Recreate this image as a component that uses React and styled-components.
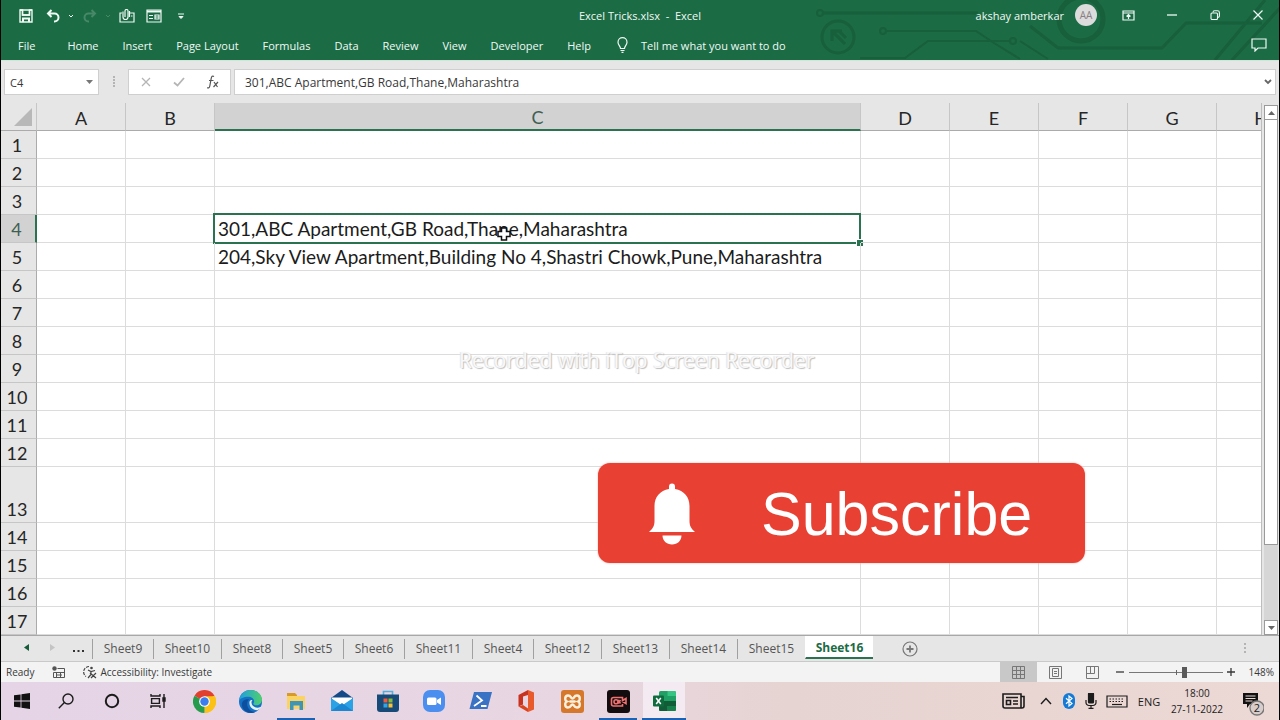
import React, { useState } from 'react';
import styled, { createGlobalStyle } from 'styled-components';

const UI_FONT = '"Open Sans", "Noto Sans", sans-serif';
const CELL_FONT = 'Lato, "Noto Sans", sans-serif';

const GlobalStyle = createGlobalStyle`
  * {
    box-sizing: border-box;
  }
  body {
    margin: 0;
    font-family: ${UI_FONT};
    font-size: 11px;
    color: #383838;
  }
  button, input {
    margin: 0;
    padding: 0;
    border: 0;
    background: none;
    color: inherit;
    font: inherit;
  }
  svg {
    display: block;
    flex: none;
  }
`;

const Window = styled.div`
  display: flex;
  flex-direction: column;
  height: 100vh;
  overflow: hidden;
  border: solid #000;
  border-width: 0 1px;
  background: #e6e6e6;
`;

/* ---------- title bar and ribbon ---------- */

const Header = styled.header`
  position: relative;
  flex: none;
  background: #1b6b45;
  color: #f0faf4;
`;

const Circuit = styled.svg`
  position: absolute;
  top: 0;
  right: 0;
`;

const TitleBar = styled.div`
  position: relative;
  display: grid;
  grid-template-columns: 1fr auto 1fr;
  align-items: center;
  height: 28px;
`;

const QuickAccess = styled.div`
  display: flex;
  align-items: center;
  padding: 2px 0 0 11px;
`;

const QuickButton = styled.button`
  display: flex;
  align-items: center;
  justify-content: center;
  width: ${(props) => (props.$narrow ? 10 : 27)}px;
  height: 28px;
  opacity: ${(props) => (props.disabled ? 0.2 : 1)};
`;

const Title = styled.h1`
  margin: 0;
  font-size: 11px;
  font-weight: 400;
  white-space: pre;
`;

const WindowControls = styled.div`
  display: flex;
  align-items: center;
  justify-content: flex-end;
`;

const Avatar = styled.span`
  display: flex;
  align-items: center;
  justify-content: center;
  width: 22px;
  height: 22px;
  margin: 0 10px 0 11px;
  border-radius: 50%;
  background: #dcdcdc;
  color: #8a7f84;
  font-size: 10px;
`;

const ControlButton = styled.button`
  display: flex;
  align-items: center;
  justify-content: center;
  width: 43px;
  height: 28px;
`;

const Ribbon = styled.nav`
  position: relative;
  display: flex;
  align-items: center;
  height: 32px;
  padding: 2px 0 0 5px;
`;

const RibbonTab = styled.button`
  height: 30px;
  padding: 0 12px;
  white-space: nowrap;
  &:first-child {
    margin-right: 8px;
  }
`;

const TellMe = styled.button`
  display: flex;
  align-items: center;
  gap: 13px;
  height: 30px;
  padding: 0 14px;
`;

const CommentButton = styled(ControlButton)`
  margin: 0 -1px 0 auto;
`;

/* ---------- formula bar ---------- */

const FormulaBar = styled.div`
  display: flex;
  flex: none;
  align-items: center;
  height: 43px;
  padding: 0 3px;
  border-top: 1px solid #cfe6d8;
  font-size: 12px;
`;

const Box = styled.div`
  display: flex;
  align-items: center;
  height: 26px;
  border: 1px solid #cfcfcf;
  background: #fff;
`;

const NameBox = styled(Box)`
  width: 95px;
  input {
    flex: 1;
    min-width: 0;
    padding-left: 5px;
    font-size: 11px;
  }
`;

const FormulaTools = styled(Box)`
  width: 103px;
  justify-content: space-around;
`;

const FormulaBox = styled(Box)`
  flex: 1;
  margin-left: 3px;
  input {
    flex: 1;
    min-width: 0;
    padding-left: 10px;
  }
`;

const IconButton = styled.button`
  display: flex;
  align-items: center;
  justify-content: center;
  width: ${(props) => props.$w || 18}px;
  height: 20px;
`;

const Grip = styled.span`
  width: 29px;
  display: flex;
  justify-content: center;
`;

/* ---------- grid ---------- */

const Sheet = styled.main`
  position: relative;
  display: flex;
  flex: 1;
  min-height: 0;
  overflow: hidden;
`;

const GridArea = styled.div`
  flex: 1;
  min-width: 0;
  overflow: hidden;
  border-right: 1px solid #bdbdbd;
`;

const Grid = styled.table`
  width: 1305px;
  border-collapse: separate;
  border-spacing: 0;
  table-layout: fixed;
  background: #fff;
  font-family: ${CELL_FONT};
  font-size: 18px;
  color: #1c1c1c;
`;

const Corner = styled.td`
  height: 28px;
  padding: 0;
  border-right: 1px solid #c6c6c6;
  border-bottom: 1px solid #ababab;
  background: #e6e6e6;
  svg {
    margin-left: auto;
  }
`;

const ColHead = styled.th`
  height: 28px;
  padding: 2px 0 0;
  border-right: 1px solid #c6c6c6;
  border-bottom: ${(props) => (props.$active ? '2px solid #2b7350' : '1px solid #ababab')};
  background: ${(props) => (props.$active ? '#d2d2d2' : '#e6e6e6')};
  color: ${(props) => (props.$active ? '#3f5f52' : '#262626')};
  font-weight: 400;
  line-height: 20px;
`;

const RowHead = styled.th`
  height: ${(props) => (props.$tall ? 56 : 28)}px;
  padding: 0 3px 0 0;
  border-right: ${(props) => (props.$active ? '2px solid #2b7350' : '1px solid #ababab')};
  border-bottom: 1px solid #c6c6c6;
  background: ${(props) => (props.$active ? '#d2d2d2' : '#e6e6e6')};
  color: ${(props) => (props.$active ? '#3f5f52' : '#262626')};
  font-weight: 400;
  line-height: 26px;
  vertical-align: bottom;
`;

const Cell = styled.td`
  position: relative;
  padding: 0 0 0 3px;
  border-right: 1px solid #dcdcdc;
  border-bottom: 1px solid #dcdcdc;
  font-size: 19px;
  line-height: 24px;
  white-space: nowrap;
`;

const Selection = styled.div`
  position: absolute;
  inset: -2px -1px -2px -2px;
  border: 2px solid #2b7350;
  &::after {
    content: '';
    position: absolute;
    right: -4px;
    bottom: -4px;
    width: 6px;
    height: 6px;
    border: solid #fff;
    border-width: 1px 0 0 1px;
    background: #2b7350;
  }
`;

const Pointer = styled.svg`
  position: absolute;
  left: 496px;
  top: 124px;
`;

const Watermark = styled.div`
  position: absolute;
  top: 243px;
  left: 458px;
  color: #f8f8f8;
  font-size: 21px;
  line-height: 28px;
  text-shadow: 1px 1px 1px #bdbdbd, -1px 0 1px #e4e4e4;
  white-space: nowrap;
`;

const Subscribe = styled.button`
  position: absolute;
  top: 360px;
  left: 597px;
  display: flex;
  align-items: center;
  gap: 65px;
  height: 100px;
  padding: 2px 53px 0 50px;
  border-radius: 12px;
  background: #e84133;
  box-shadow: 0 0 2px #f3a9a2;
  color: #fff;
  font-family: "Liberation Sans", Arial, sans-serif;
  font-size: 61px;
`;

const ScrollBar = styled.div`
  display: flex;
  flex-direction: column;
  width: 17px;
  padding: 2px 1px 0 2px;
  background: #e6e6e6;
`;

const ScrollButton = styled.button`
  display: flex;
  align-items: center;
  justify-content: center;
  height: 15px;
  border: 1px solid #9a9a9a;
  background: #fff;
`;

const ScrollTrack = styled.div`
  flex: 1;
  background: #d6d6d6;
`;

const ScrollThumb = styled.div`
  height: 85%;
  border: 1px solid #9a9a9a;
  border-top: 0;
  background: #fff;
`;

/* ---------- sheet tabs and status bar ---------- */

const TabBar = styled.div`
  display: flex;
  flex: none;
  height: 27px;
  border-top: 1px solid #a8a8a8;
  border-bottom: 1px solid #c9c9c9;
  background: #e6e6e6;
  font-size: 12px;
`;

const TabNav = styled.div`
  display: flex;
  align-items: center;
  width: 91px;
  padding: 0 0 2px 12px;
`;

const SheetTab = styled.button`
  align-self: flex-start;
  width: ${(props) => (props.$wide ? 68 : 61)}px;
  height: ${(props) => (props.$active ? 23 : 20)}px;
  margin-top: ${(props) => (props.$active ? 0 : 3)}px;
  padding: ${(props) => (props.$active ? '2px 0 0' : '0 0 2px')};
  border-left: 1px solid ${(props) => (props.$active ? 'transparent' : '#a0a0a0')};
  border-bottom: ${(props) => (props.$active ? '2px solid #2b7350' : '0')};
  background: ${(props) => (props.$active ? '#fff' : 'none')};
  color: ${(props) => (props.$active ? '#1b6b45' : '#555')};
  font-weight: ${(props) => (props.$active ? 700 : 400)};
`;

const AddSheet = styled(IconButton)`
  align-self: center;
  margin-left: 28px;
`;

const TabGrip = styled.span`
  align-self: center;
  margin: 0 33px 0 auto;
`;

const StatusBar = styled.div`
  display: flex;
  flex: none;
  align-items: center;
  height: 20px;
  padding-left: 5px;
  background: #f3f3f3;
`;

const StatusItem = styled.button`
  display: flex;
  align-items: center;
  gap: 2px;
  margin-right: ${(props) => props.$gap || 0}px;
  font-size: 10px;
  white-space: nowrap;
`;

const ViewButtons = styled.div`
  display: flex;
  margin-left: auto;
`;

const ViewButton = styled.button`
  display: flex;
  align-items: center;
  justify-content: center;
  width: 37px;
  height: 20px;
  background: ${(props) => (props.$active ? '#c8c8c8' : 'none')};
`;

const ZoomSlider = styled.input`
  appearance: none;
  width: 94px;
  height: 11px;
  background:
    linear-gradient(#666, #666) 50% 50% / 1px 5px no-repeat,
    linear-gradient(#777, #777) 0 50% / 100% 1px no-repeat;
  &::-webkit-slider-thumb {
    appearance: none;
    width: 5px;
    height: 11px;
    background: #5a5a5a;
  }
`;

const ZoomValue = styled.button`
  width: 40px;
  padding-right: 5px;
  font-size: 10px;
  text-align: right;
`;

/* ---------- taskbar ---------- */

const Taskbar = styled.footer`
  display: flex;
  flex: none;
  height: 38px;
  background: linear-gradient(90deg, #e5d4e6 0%, #e8d6e2 45%, #e6d4d2 62%, #ecd8d4 100%);
  color: #1c1c1c;
`;

const TaskButton = styled.button`
  display: flex;
  align-items: center;
  justify-content: center;
  width: 46px;
  height: 38px;
  &:first-child {
    width: 42px;
  }
`;

const RunningButton = styled(TaskButton)`
  background: linear-gradient(#1c62b4, #1c62b4) 50% 100% / 38px 2px no-repeat;
`;

const ActiveButton = styled(TaskButton)`
  background:
    linear-gradient(#1c62b4, #1c62b4) 50% 100% / 44px 2px no-repeat,
    linear-gradient(#f4eaf2, #f4eaf2) 50% 0 / 42px 100% no-repeat;
`;

const Tray = styled.div`
  display: flex;
  align-items: center;
  margin-left: auto;
  padding-right: 3px;
`;

const TrayButton = styled.button`
  display: flex;
  align-items: center;
  justify-content: center;
  width: ${(props) => props.$w}px;
  height: 38px;
`;

const Clock = styled.time`
  width: 62px;
  font-size: 10px;
  line-height: 16px;
  text-align: center;
`;

/* ---------- data ---------- */

const ribbonTabs = [
  'File',
  'Home',
  'Insert',
  'Page Layout',
  'Formulas',
  'Data',
  'Review',
  'View',
  'Developer',
  'Help',
];

const columns = ['A', 'B', 'C', 'D', 'E', 'F', 'G', 'H'];
const rows = Array.from({ length: 17 }, (_, i) => i + 1);

const cells = {
  C4: '301,ABC Apartment,GB Road,Thane,Maharashtra',
  C5: '204,Sky View Apartment,Building No 4,Shastri Chowk,Pune,Maharashtra',
};

const sheets = [9, 10, 8, 5, 6, 11, 4, 12, 13, 14, 15, 16];

/* ---------- icons ---------- */

const Line = ({ w = 16, h = w, sw = 1, children, ...rest }) => (
  <svg
    width={w}
    height={h}
    viewBox={`0 0 ${w} ${h}`}
    fill="none"
    stroke="currentColor"
    strokeWidth={sw}
    {...rest}
  >
    {children}
  </svg>
);

const Caret = ({ color = 'currentColor' }) => (
  <svg width="7" height="4" viewBox="0 0 7 4">
    <path d="M0 0h7L3.5 4z" fill={color} />
  </svg>
);

const taskIcons = [
  {
    name: 'Start',
    icon: (
      <svg width="16" height="16" viewBox="0 0 16 16" fill="#111">
        <path d="M0 2.3 6.6 1.4v6.2H0zM7.4 1.3 16 0v7.6H7.4zM0 8.4h6.6v6.2L0 13.7zM7.4 8.4H16V16l-8.6-1.3z" />
      </svg>
    ),
  },
  {
    name: 'Search',
    icon: (
      <Line w={16} sw={1.4}>
        <circle cx="10" cy="6" r="5" />
        <path d="M6.4 9.6.8 15.2" />
      </Line>
    ),
  },
  {
    name: 'Cortana',
    icon: (
      <Line w={16} sw={2}>
        <circle cx="8" cy="8" r="6.2" />
      </Line>
    ),
  },
  {
    name: 'Task View',
    icon: (
      <Line w={18} h={16} sw={1.4}>
        <path d="M2 1v2h9V1M2 15v-2h9v2M2.6 5.6h7.8v4.8H2.6zM15 1v14" />
        <path d="M14 5h2v3h-2z" fill="currentColor" />
      </Line>
    ),
  },
  {
    name: 'Google Chrome',
    icon: (
      <svg width="23" height="23" viewBox="0 0 24 24">
        <path d="M12 12 1.6 6A12 12 0 0 1 22.4 6z" fill="#e2402f" />
        <path d="M12 12 22.4 6A12 12 0 0 1 12 24z" fill="#fbc116" />
        <path d="M12 12v12A12 12 0 0 1 1.6 6z" fill="#269b4c" />
        <path d="M12 6.5h10.7A12 12 0 0 1 12 24l4.8-9.2z" fill="#fbc116" />
        <circle cx="12" cy="12" r="5.6" fill="#fff" />
        <circle cx="12" cy="12" r="4.4" fill="#3b7ded" />
      </svg>
    ),
  },
  {
    name: 'Microsoft Edge',
    icon: (
      <svg width="23" height="23" viewBox="0 0 24 24">
        <defs>
          <linearGradient id="edgeTop" x1="0" x2="1">
            <stop offset="0" stopColor="#1f9ee0" />
            <stop offset="1" stopColor="#4fcf6d" />
          </linearGradient>
        </defs>
        <circle cx="12" cy="12" r="12" fill="#1470c4" />
        <path d="M0 11C1 4 6 0 12 0c7 0 12 5 12 10 0 4-3 6-6 6-2 0-3-.8-3-1.6 0-.7.8-1 .8-2.6C15.8 9 13 7 9.5 7 5 7 1 9 0 11z" fill="url(#edgeTop)" />
        <path d="M11 12c-1 5 3 9 8 9 2-.6 3.5-2 4.500-3.400-4 2-10.500.4-10.500-4.600 0-1.200.6-2 1-2.600-1 0-2.600.4-3 1.600z" fill="#e6f3fa" />
        <path d="M9 12c-2 5 2 11 8 11-7 3-14-2-14-8 0-4 4-6.500 8-5-1 .2-1.600.9-2 2z" fill="#0d4f9e" />
      </svg>
    ),
  },
  {
    name: 'File Explorer',
    button: RunningButton,
    icon: (
      <svg width="20" height="19" viewBox="0 0 20 19">
        <path d="M1 1h8l2 2v3H1z" fill="#d99a25" />
        <path d="M1 4h18v13H1z" fill="#fbd264" />
        <path d="M4 9h13v9h-3.5v-4.500h-6V18H4z" fill="#3e95b5" />
      </svg>
    ),
  },
  {
    name: 'Mail',
    icon: (
      <svg width="24" height="22" viewBox="0 0 24 22">
        <path d="M1 8 12 0l11 8v4H1z" fill="#134a87" />
        <path d="M1 8h22v13H1z" fill="#1f93dc" />
        <path d="M2 7.500h20v2L12 16 2 9.500z" fill="#fff" />
        <path d="M1 8l11 7.500L23 8v13H1z" fill="#2ba2e6" />
        <path d="M1 21 12 13l11 8z" fill="#1b86d2" />
      </svg>
    ),
  },
  {
    name: 'Microsoft Store',
    icon: (
      <svg width="22" height="22" viewBox="0 0 22 22">
        <path d="M6.500 5V1.500h9V5" fill="none" stroke="#4fb0de" strokeWidth="1.600" />
        <path d="M0 4.500h22V19a3 3 0 0 1-3 3H3a3 3 0 0 1-3-3z" fill="#174a78" />
        <path d="M6.500 8.500h4v4h-4z" fill="#ef5a3b" />
        <path d="M11.500 8.500h4v4h-4z" fill="#86b93c" />
        <path d="M6.500 13.500h4v4h-4z" fill="#31a5e4" />
        <path d="M11.500 13.500h4v4h-4z" fill="#f7c13a" />
      </svg>
    ),
  },
  {
    name: 'Zoom',
    icon: (
      <svg width="22" height="22" viewBox="0 0 22 22">
        <rect width="22" height="22" rx="7" fill="#4a8ff0" />
        <rect x="4" y="7.500" width="9.500" height="7.500" rx="1.500" fill="#fff" />
        <path d="m14 10 4-2.500v7.500l-4-2.500z" fill="#fff" />
      </svg>
    ),
  },
  {
    name: 'PowerShell',
    icon: (
      <svg width="23" height="18" viewBox="0 0 23 18">
        <path d="M5 0h18l-4.500 17H.5z" fill="#3a72c4" />
        <path d="m7.500 3.500 5.500 5-8 5.500M12 14h5.500" fill="none" stroke="#fff" strokeWidth="1.800" />
      </svg>
    ),
  },
  {
    name: 'Office',
    icon: (
      <svg width="18" height="22" viewBox="0 0 18 22">
        <path d="m11 0 6 2.500v17L11 22z" fill="#e8592c" />
        <path d="M11 0v5L6 6.500v8l-4.500 2V5z" fill="#c8331f" />
        <path d="M1.500 16.500 6 15l5 3.500V22z" fill="#d9431f" />
      </svg>
    ),
  },
  {
    name: 'XAMPP',
    icon: (
      <svg width="23" height="23" viewBox="0 0 23 23">
        <rect width="23" height="23" rx="3" fill="#d6782b" />
        <path
          d="M7 5.500c3.500 0 2.500 3 4.500 3s1-3 4.500-3 3.500 5 1 6c2.500 1 2.500 6-1 6s-2.500-3-4.500-3-1 3-4.500 3-3.500-5-1-6c-2.500-1-2.500-6 1-6zM8.500 11.500h6"
          fill="none"
          stroke="#fdf0dc"
          strokeWidth="2.400"
        />
      </svg>
    ),
  },
  {
    name: 'iTop Screen Recorder',
    button: RunningButton,
    icon: (
      <svg width="23" height="23" viewBox="0 0 23 23">
        <rect width="23" height="23" rx="3" fill="#120c0e" />
        <g fill="none" stroke="#f0716f" strokeWidth="1.600">
          <path d="M15.500 14v2h-9a2 2 0 0 1-2-2V9.500a2 2 0 0 1 2-2h9v3l3.500-2v5l-3.500-2" />
          <circle cx="9" cy="11.700" r="2" />
          <path d="m11 10 2.500 3.500M13.500 10 11 13.500" />
        </g>
      </svg>
    ),
  },
  {
    name: 'Excel',
    button: ActiveButton,
    icon: (
      <svg width="23" height="20" viewBox="0 0 23 20">
        <rect x="6" width="17" height="20" rx="1.500" fill="#21a065" />
        <path d="M6 10h8.500v10H7.500A1.500 1.500 0 0 1 6 18.500zM14.500 10H23v5h-8.500z" fill="#125c38" />
        <path d="M14.500 15H23v3.500a1.500 1.500 0 0 1-1.500 1.500h-7z" fill="#17804b" />
        <path d="M14.500 0h7A1.500 1.500 0 0 1 23 1.500V5h-8.500z" fill="#35c481" />
        <rect y="4.500" width="11" height="11" rx="1" fill="#0f6b3d" />
        <path d="m3.200 7 4.600 6M7.800 7l-4.600 6" stroke="#fff" strokeWidth="1.500" />
      </svg>
    ),
  },
];

function TitleArea() {
  return (
    <Header>
      <Circuit width="464" height="60" viewBox="815 0 464 60" fill="none" stroke="#185f3c" strokeWidth="2">
        <circle cx="820" cy="13" r="3" />
        <path d="M823 13h155" strokeWidth="3" />
        <circle cx="838" cy="37" r="16" strokeWidth="3" />
        <path d="m845 44-12-12M832 41v-10h10M838 30l8 8" strokeWidth="3" />
        <circle cx="883" cy="31" r="3" />
        <path d="M886 31h90l18 12 26 16M860 58h45l23-17h83M1020 41l28 18" />
        <circle cx="1013" cy="41" r="3" />
        <path d="m1030 26 28 22h104l24-25h76" strokeWidth="3" />
        <circle cx="1081" cy="19" r="22" strokeWidth="5" />
        <path d="m1215 60 50-60M1232 60l48-52" strokeWidth="3" />
      </Circuit>
      <TitleBar>
        <QuickAccess>
          <QuickButton aria-label="Save">
            <Line w={14} sw={1.4}>
              <path d="M1 1h12v12H1zM3.500 1v5h7V1" />
              <path d="M1 1h2.500v5h7V1H13" />
              <path d="M4 13V9.500h6V13" strokeWidth="2" />
            </Line>
          </QuickButton>
          <QuickButton aria-label="Undo">
            <Line w={14} sw={2}>
              <path d="M5.500 1 2 4.500 5.500 8M2 4.500h6.500a4 4 0 0 1 0 8H8" />
            </Line>
          </QuickButton>
          <QuickButton aria-label="Undo list" $narrow>
            <Line w={6} h={4}>
              <path d="m1 1 2 2 2-2" />
            </Line>
          </QuickButton>
          <QuickButton aria-label="Redo" disabled>
            <Line w={14} sw={2}>
              <path d="M8.500 1 12 4.500 8.500 8M12 4.500H5.500a4 4 0 0 0 0 8H6" />
            </Line>
          </QuickButton>
          <QuickButton aria-label="Redo list" $narrow disabled>
            <Line w={6} h={4}>
              <path d="m1 1 2 2 2-2" />
            </Line>
          </QuickButton>
          <QuickButton aria-label="Attach">
            <Line w={16} h={14} sw={1.2}>
              <path d="M3 4H1v9h14V4h-4M12 7h1.500" />
              <path d="M4 2.500V8a2.500 2.500 0 0 0 5 0V2a1.500 1.500 0 0 0-3 0v6M10.500 2v6" />
            </Line>
          </QuickButton>
          <QuickButton aria-label="Form">
            <Line w={16} h={14} sw={1.2}>
              <path d="M1 1h14v12H1zM3 6.500h4M3 9.500h4M9 6h4v4H9zM9 8h4" />
              <path d="M1 2.500h14" strokeWidth="2" />
            </Line>
          </QuickButton>
          <QuickButton aria-label="Customize">
            <Line w={6} h={7}>
              <path d="M0 1h6M1 3.500l2 2 2-2z" fill="currentColor" />
            </Line>
          </QuickButton>
        </QuickAccess>
        <Title>{'Excel Tricks.xlsx  -  Excel'}</Title>
        <WindowControls>
          <span>akshay amberkar</span>
          <Avatar>AA</Avatar>
          <ControlButton aria-label="Ribbon display options">
            <Line w={13} h={11} sw={1.2}>
              <path d="M1 1h11v9H1zM1 3h11M6.500 9V5M4.500 6.500l2-2 2 2" />
            </Line>
          </ControlButton>
          <ControlButton aria-label="Minimize">
            <Line w={10} h={2}>
              <path d="M0 1h10" strokeWidth="1.300" />
            </Line>
          </ControlButton>
          <ControlButton aria-label="Restore">
            <Line w={10} sw={1.1}>
              <rect x="1" y="3" width="6.500" height="6.500" rx="1" />
              <path d="M3 2.500C3 1 3.500.8 4.500.8h3c1.500 0 1.900.4 1.900 1.900v3c0 1-.4 1.600-1.400 1.600" />
            </Line>
          </ControlButton>
          <ControlButton aria-label="Close">
            <Line w={10} sw={1.2}>
              <path d="m.5.5 9 9m0-9-9 9" />
            </Line>
          </ControlButton>
        </WindowControls>
      </TitleBar>
      <Ribbon>
        {ribbonTabs.map((tab) => (
          <RibbonTab key={tab}>{tab}</RibbonTab>
        ))}
        <TellMe>
          <Line w={11} h={16} sw={1.2}>
            <path d="M3.500 11.500C3.500 9 1 8 1 5.200a4.500 4.500 0 0 1 9 0C10 8 7.500 9 7.500 11.500zM3.500 13.500h4M4.500 15.300h2" />
          </Line>
          Tell me what you want to do
        </TellMe>
        <CommentButton aria-label="Comments">
          <Line w={16} h={14} sw={1.2}>
            <path d="M1 1h14v9H7l-3 3v-3H1z" />
          </Line>
        </CommentButton>
      </Ribbon>
    </Header>
  );
}

function FormulaRow({ value, onChange }) {
  return (
    <FormulaBar>
      <NameBox>
        <input aria-label="Name box" defaultValue="C4" />
        <IconButton aria-label="Name list">
          <Caret color="#777" />
        </IconButton>
      </NameBox>
      <Grip>
        <svg width="2" height="12" viewBox="0 0 2 12" fill="#b4b4b4">
          <path d="M0 0h2v2H0zM0 3h2v2H0zM0 6h2v2H0zM0 9h2v2H0z" />
        </svg>
      </Grip>
      <FormulaTools>
        <IconButton aria-label="Cancel">
          <Line w={10} sw={1.3} color="#b5b5b5">
            <path d="m1 1 8 8m0-8-8 8" />
          </Line>
        </IconButton>
        <IconButton aria-label="Enter">
          <Line w={12} h={10} sw={1.8} color="#b5b5b5">
            <path d="m1 5.500 3.500 3L11 1" />
          </Line>
        </IconButton>
        <IconButton aria-label="Insert function">
          <Line w={14} h={14} sw={1.2} color="#555">
            <path d="M8 1.500c-1.500-1-2.400 0-2.800 1.800L3.800 11c-.4 2-1.300 2.300-2.600 1.600M3 5.500h4.500" />
            <path d="m8 7 3.500 5M12 7l-4.500 5" />
          </Line>
        </IconButton>
      </FormulaTools>
      <FormulaBox>
        <input aria-label="Formula bar" value={value} onChange={onChange} />
        <IconButton aria-label="Expand formula bar" $w={14}>
          <Line w={8} h={6} sw={1.8} color="#666">
            <path d="m1 1 3 3 3-3" />
          </Line>
        </IconButton>
      </FormulaBox>
    </FormulaBar>
  );
}

function SheetGrid({ values }) {
  return (
    <Sheet>
      <GridArea>
        <Grid>
          <colgroup>
            <col style={{ width: 36 }} />
            {columns.map((col) => (
              <col key={col} style={{ width: col === 'C' ? 646 : 89 }} />
            ))}
          </colgroup>
          <thead>
            <tr>
              <Corner>
                <svg width="22" height="22" viewBox="0 0 22 22">
                  <path d="M18 2v18H0z" fill="#b8b8b8" />
                </svg>
              </Corner>
              {columns.map((col) => (
                <ColHead key={col} scope="col" $active={col === 'C'}>
                  {col}
                </ColHead>
              ))}
            </tr>
          </thead>
          <tbody>
            {rows.map((row) => (
              <tr key={row}>
                <RowHead scope="row" $active={row === 4} $tall={row === 13}>
                  {row}
                </RowHead>
                {columns.map((col) => (
                  <Cell key={col}>
                    {values[col + row]}
                    {col + row === 'C4' && <Selection />}
                  </Cell>
                ))}
              </tr>
            ))}
          </tbody>
        </Grid>
      </GridArea>
      <ScrollBar>
        <ScrollButton aria-label="Scroll up">
          <svg width="7" height="4" viewBox="0 0 7 4">
            <path d="M0 4h7L3.500 0z" fill="#666" />
          </svg>
        </ScrollButton>
        <ScrollTrack>
          <ScrollThumb />
        </ScrollTrack>
        <ScrollButton aria-label="Scroll down">
          <Caret color="#666" />
        </ScrollButton>
      </ScrollBar>
      <Watermark>Recorded with iTop Screen Recorder</Watermark>
      <Pointer width="14" height="14" viewBox="0 0 14 14">
        <path d="M4.500 1h5v3.500H13v5H9.500V13h-5V9.500H1v-5h3.500z" fill="#fff" stroke="#111" strokeWidth="1.500" />
      </Pointer>
      <Subscribe>
        <svg width="48" height="62" viewBox="0 0 48 62" fill="#fff">
          <path d="M21 6V3.500a3 3 0 0 1 6 0V6c9 1.500 14.500 8 14.500 17v15c0 5 2 8 5.500 11H1c3.500-3 5.500-6 5.500-11V23C6.500 14 12 7.500 21 6z" />
          <path d="M14.500 52.500h19c0 5-4 9-9.500 9s-9.500-4-9.500-9z" />
        </svg>
        Subscribe
      </Subscribe>
    </Sheet>
  );
}

function SheetTabs({ active, onSelect }) {
  return (
    <TabBar>
      <TabNav>
        <IconButton aria-label="Previous sheet" $w={26}>
          <svg width="5" height="7" viewBox="0 0 5 7">
            <path d="M5 0v7L0 3.500z" fill="#155c3a" />
          </svg>
        </IconButton>
        <IconButton aria-label="Next sheet" $w={26} disabled>
          <svg width="5" height="7" viewBox="0 0 5 7">
            <path d="M0 0v7l5-3.500z" fill="#c4c4c4" />
          </svg>
        </IconButton>
        <IconButton aria-label="More sheets" $w={27}>
          <svg width="11" height="8" viewBox="0 0 11 8" fill="#333">
            <path d="M0 6h2v2H0zM4.500 6h2v2h-2zM9 6h2v2H9z" />
          </svg>
        </IconButton>
      </TabNav>
      {sheets.map((n) => (
        <SheetTab
          key={n}
          $wide={n > 9}
          $active={n === active}
          onClick={() => onSelect(n)}
        >
          Sheet{n}
        </SheetTab>
      ))}
      <AddSheet aria-label="New sheet">
        <Line w={16} color="#777" sw={1.2}>
          <circle cx="8" cy="8" r="7" />
          <path d="M8 4.500v7M4.500 8h7" strokeWidth="1.800" />
        </Line>
      </AddSheet>
      <TabGrip>
        <svg width="2" height="11" viewBox="0 0 2 11" fill="#b4b4b4">
          <path d="M0 0h2v2H0zM0 4h2v2H0zM0 8h2v2H0z" />
        </svg>
      </TabGrip>
    </TabBar>
  );
}

function Status() {
  const [zoom, setZoom] = useState(59);

  return (
    <StatusBar>
      <StatusItem $gap={18}>Ready</StatusItem>
      <StatusItem aria-label="Record macro" $gap={17}>
        <Line w={13} h={12} color="#555">
          <path d="M5.500 2.500h7v9H1.500V6.500h11M4 9h6M4.500 6.500v5M8.500 6.500v5" />
          <circle cx="2.500" cy="2.500" r="2.200" fill="currentColor" stroke="none" />
        </Line>
      </StatusItem>
      <StatusItem>
        <Line w={16} h={14} sw={1.2} color="#444">
          <path d="M7 1.500A5.500 5.500 0 0 0 4 11.500" strokeDasharray="3 1.200" />
          <circle cx="9.500" cy="3" r="1.300" fill="currentColor" stroke="none" />
          <path d="m6 5 3 1.500 4-1M9 6.500v3l-3 3.500M8 8l6 5M14 8l-5 5" />
        </Line>
        Accessibility: Investigate
      </StatusItem>
      <ViewButtons>
        <ViewButton aria-label="Normal" $active>
          <Line w={13} color="#777">
            <path d="M.5.5h12v12H.5zM.5 4.500h12M.5 8.500h12M4.500.5v12M8.500.5v12" />
          </Line>
        </ViewButton>
        <ViewButton aria-label="Page layout">
          <Line w={13} color="#777">
            <path d="M.5.5h12v12H.5zM3.500 2.500h6v8h-6zM5 5.500h3M5 7.500h3" />
          </Line>
        </ViewButton>
        <ViewButton aria-label="Page break preview">
          <Line w={13} color="#777">
            <path d="M.5.5h12v12H.5zM4.500.5v7M8.500.5v7M.5 7.500h8" />
          </Line>
        </ViewButton>
      </ViewButtons>
      <IconButton aria-label="Zoom out">
        <Line w={8} sw={1.3}>
          <path d="M0 4h8" />
        </Line>
      </IconButton>
      <ZoomSlider
        type="range"
        aria-label="Zoom"
        value={zoom}
        onChange={(e) => setZoom(Number(e.target.value))}
      />
      <IconButton aria-label="Zoom in" $w={16}>
        <Line w={8} sw={1.3}>
          <path d="M0 4h8M4 0v8" />
        </Line>
      </IconButton>
      <ZoomValue>148%</ZoomValue>
    </StatusBar>
  );
}

function TaskbarArea() {
  return (
    <Taskbar>
      {taskIcons.map(({ name, icon, button: Button = TaskButton }) => (
        <Button key={name} aria-label={name}>
          {icon}
        </Button>
      ))}
      <Tray>
        <TrayButton aria-label="News" $w={42}>
          <Line w={23} h={16} sw={1.6}>
            <path d="M1 1h18v14H3a2 2 0 0 1-2-2zM19 3.500h3V13a2 2 0 0 1-2 2h-2M4 4.500h12M11 8h5M11 11h5" />
            <path d="M4.500 7.500h4v4h-4z" />
          </Line>
        </TrayButton>
        <TrayButton aria-label="Hidden icons" $w={24}>
          <Line w={12} h={8} sw={1.4}>
            <path d="m1 7 5-5.500L11 7" />
          </Line>
        </TrayButton>
        <TrayButton aria-label="Bluetooth" $w={22}>
          <svg width="12" height="16" viewBox="0 0 12 16">
            <rect width="12" height="16" rx="6" fill="#147ad6" />
            <path d="m3 5.200 6 5.300-3 2.500V3l3 2.500-6 5.300" fill="none" stroke="#fff" strokeWidth="1.200" />
          </svg>
        </TrayButton>
        <TrayButton aria-label="Microphone" $w={22}>
          <Line w={12} h={16} sw={1.2}>
            <rect x="3.500" y="0" width="5" height="10" rx="1" fill="currentColor" />
            <path d="M1 7v2.500a3 3 0 0 0 3 3h4a3 3 0 0 0 3-3V7M6 12.500V15M3.500 15.300h5" />
          </Line>
        </TrayButton>
        <TrayButton aria-label="Touch keyboard" $w={30}>
          <Line w={22} h={13} sw={1.2}>
            <path d="M1 1h20v11H1z" />
            <path d="M3.500 4h15M3.500 6.500h15" strokeDasharray="1.500 1.500" />
            <path d="M6 9.500h10" />
          </Line>
        </TrayButton>
        <TrayButton $w={34}>ENG</TrayButton>
        <Clock>
          18:00
          <br />
          27-11-2022
        </Clock>
        <TrayButton aria-label="2 notifications" $w={48}>
          <svg width="24" height="30" viewBox="0 0 24 30">
            <path d="M3 7h15v11h-8l-3 4v-4H3z" fill="#111" />
            <path d="M5.500 10h10M5.500 12.500h10M5.500 15h7" stroke="#e8d6d3" strokeWidth="1" />
            <circle cx="17" cy="22" r="7" fill="#d9cdcb" stroke="#777" strokeWidth="1.300" />
            <text x="17" y="26" fontSize="11" textAnchor="middle" fill="#222">
              2
            </text>
          </svg>
        </TrayButton>
      </Tray>
    </Taskbar>
  );
}

function App() {
  const [values, setValues] = useState(cells);
  const [sheet, setSheet] = useState(16);

  return (
    <Window>
      <GlobalStyle />
      <TitleArea />
      <FormulaRow
        value={values.C4}
        onChange={(e) => setValues({ ...values, C4: e.target.value })}
      />
      <SheetGrid values={values} />
      <SheetTabs active={sheet} onSelect={setSheet} />
      <Status />
      <TaskbarArea />
    </Window>
  );
}

export default App;
